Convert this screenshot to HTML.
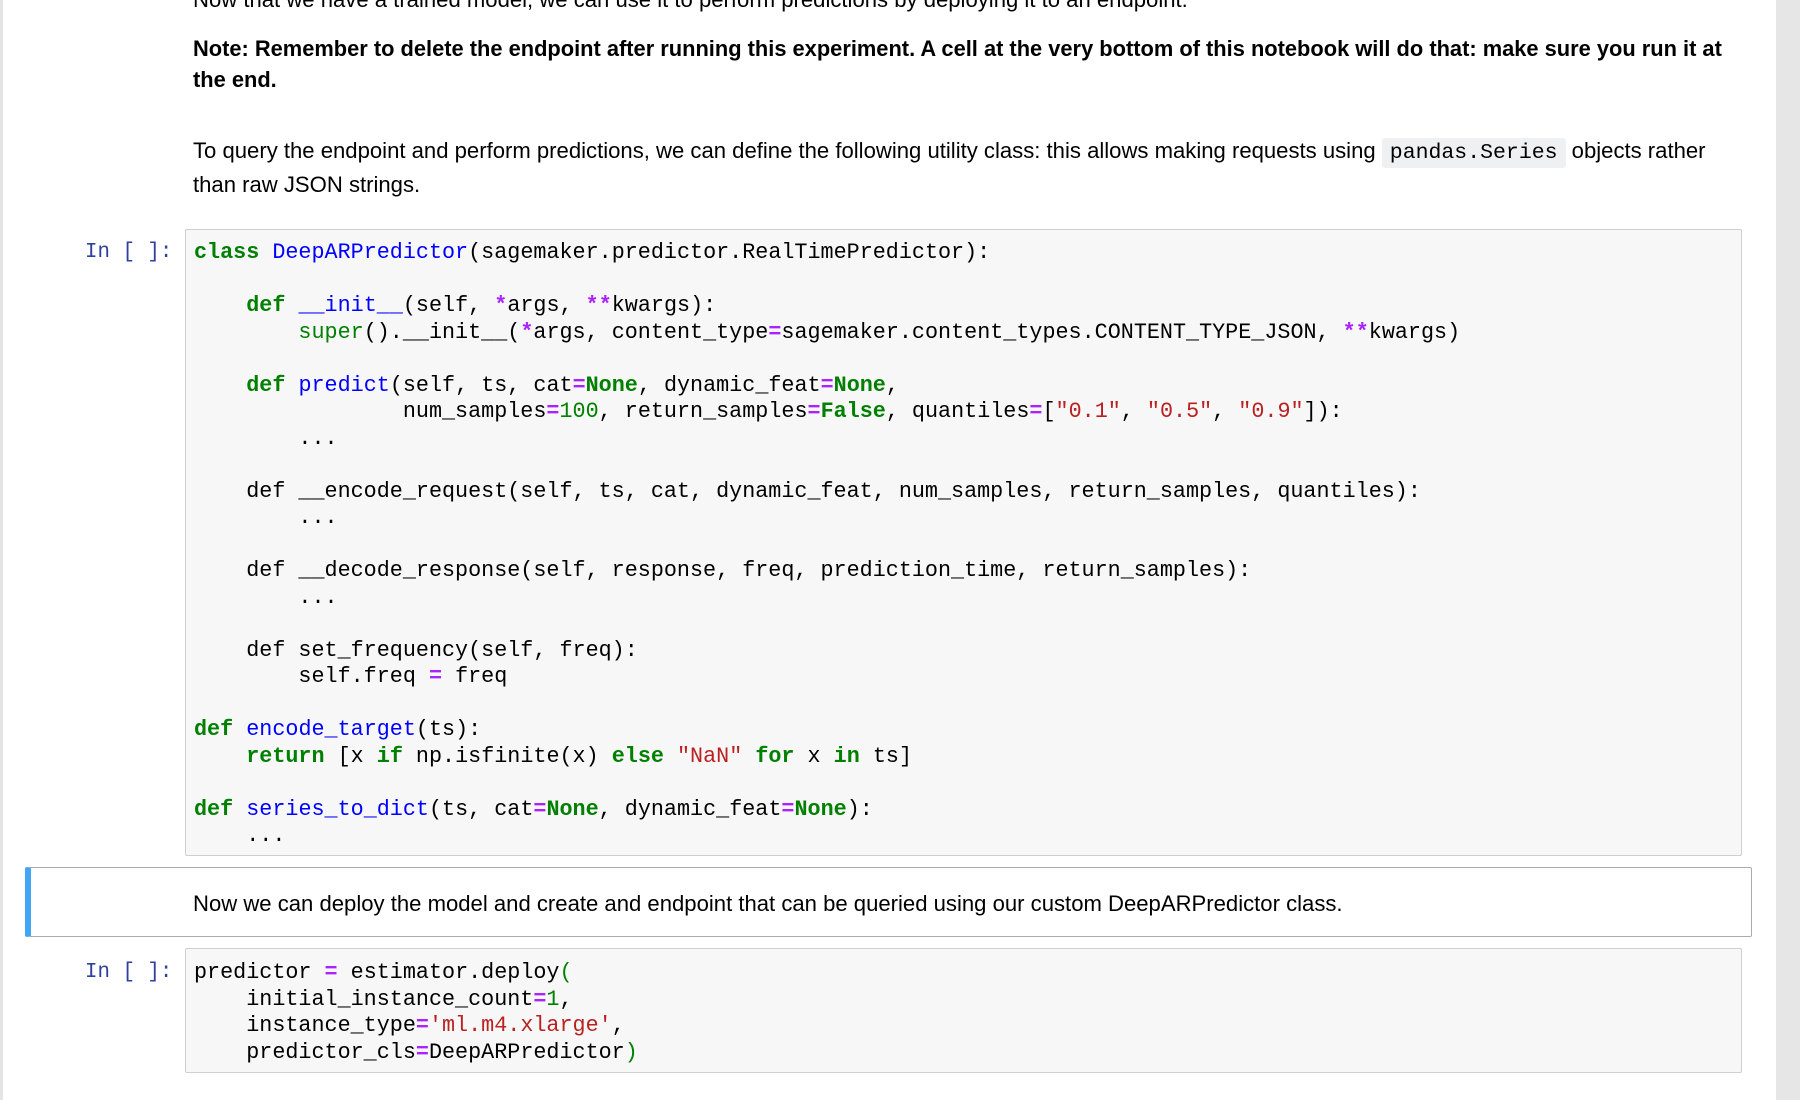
<!DOCTYPE html>
<html><head><meta charset="utf-8">
<style>
html,body{margin:0;padding:0;width:1800px;height:1100px;overflow:hidden;background:#fff;position:relative}
.lb{position:absolute;left:0;top:0;width:3px;height:1100px;background:#e4e4e4}
.sb{position:absolute;left:1776px;top:0;width:24px;height:1100px;background:#e6e6e6}
.t{position:absolute;left:193px;font-family:"Liberation Sans",Arial,sans-serif;font-size:22.1px;color:#000;white-space:nowrap;line-height:30px}
.b{font-weight:bold;font-size:21.85px}
.ic{font-family:"Liberation Mono",monospace;font-size:21.5px;background:#eff0f1;padding:3px 8px;border-radius:3px}
.box{position:absolute;left:185px;width:1557px;background:#f7f7f7;border:1px solid #cfcfcf;border-radius:2px;box-sizing:border-box}
pre{position:absolute;left:194px;margin:0;font-family:"Liberation Mono","Courier New",monospace;font-size:21.75px;line-height:26.5px;color:#000}
.pr{position:absolute;left:85px;font-family:"Liberation Mono",monospace;font-size:20.8px;color:#303f9f;line-height:26.5px}
.k{color:#008000;font-weight:bold}
.g{color:#008000}
.f{color:#0000ff}
.o{color:#aa22ff;font-weight:bold}
.s{color:#ba2121}
.md{position:absolute;left:25px;top:867px;width:1727px;height:70px;border:1px solid #ababab;border-left:6px solid #42a5f5;box-sizing:border-box;border-radius:2px}
</style></head><body>
<div class="lb"></div>
<div class="sb"></div>

<div class="t" style="top:-15px">Now that we have a trained model, we can use it to perform predictions by deploying it to an endpoint.</div>
<div class="t b" style="top:34px">Note: Remember to delete the endpoint after running this experiment. A cell at the very bottom of this notebook will do that: make sure you run it at</div>
<div class="t b" style="top:65px">the end.</div>
<div class="t" style="top:136px">To query the endpoint and perform predictions, we can define the following utility class: this allows making requests using <span class="ic">pandas.Series</span> objects rather</div>
<div class="t" style="top:170px">than raw JSON strings.</div>

<div class="box" style="top:229px;height:627px"></div>
<div class="pr" style="top:240px">In&nbsp;[&nbsp;]:</div>
<pre style="top:240px"><span class="k">class</span> <span class="f">DeepARPredictor</span>(sagemaker.predictor.RealTimePredictor):

    <span class="k">def</span> <span class="f">__init__</span>(self, <span class="o">*</span>args, <span class="o">**</span>kwargs):
        <span class="g">super</span>().__init__(<span class="o">*</span>args, content_type<span class="o">=</span>sagemaker.content_types.CONTENT_TYPE_JSON, <span class="o">**</span>kwargs)

    <span class="k">def</span> <span class="f">predict</span>(self, ts, cat<span class="o">=</span><span class="k">None</span>, dynamic_feat<span class="o">=</span><span class="k">None</span>,
                num_samples<span class="o">=</span><span class="g">100</span>, return_samples<span class="o">=</span><span class="k">False</span>, quantiles<span class="o">=</span>[<span class="s">"0.1"</span>, <span class="s">"0.5"</span>, <span class="s">"0.9"</span>]):
        ...

    def __encode_request(self, ts, cat, dynamic_feat, num_samples, return_samples, quantiles):
        ...

    def __decode_response(self, response, freq, prediction_time, return_samples):
        ...

    def set_frequency(self, freq):
        self.freq <span class="o">=</span> freq

<span class="k">def</span> <span class="f">encode_target</span>(ts):
    <span class="k">return</span> [x <span class="k">if</span> np.isfinite(x) <span class="k">else</span> <span class="s">"NaN"</span> <span class="k">for</span> x <span class="k">in</span> ts]

<span class="k">def</span> <span class="f">series_to_dict</span>(ts, cat<span class="o">=</span><span class="k">None</span>, dynamic_feat<span class="o">=</span><span class="k">None</span>):
    ...</pre>

<div class="md"></div>
<div class="t" style="top:889px">Now we can deploy the model and create and endpoint that can be queried using our custom DeepARPredictor class.</div>

<div class="box" style="top:948px;height:125px"></div>
<div class="pr" style="top:960px">In&nbsp;[&nbsp;]:</div>
<pre style="top:960px">predictor <span class="o">=</span> estimator.deploy<span class="g">(</span>
    initial_instance_count<span class="o">=</span><span class="g">1</span>,
    instance_type<span class="o">=</span><span class="s">'ml.m4.xlarge'</span>,
    predictor_cls<span class="o">=</span>DeepARPredictor<span class="g">)</span></pre>
</body></html>
